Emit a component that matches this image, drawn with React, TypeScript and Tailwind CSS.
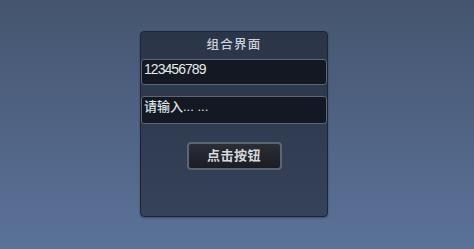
import React from "react";

export default function App() {
  return (
    <div
      className="w-[474px] h-[249px] overflow-hidden pl-[140px] pt-[31px] bg-gradient-to-b from-[#45556f] to-[#5b7299]"
      style={{ fontFamily: '"Liberation Sans", "Noto Sans CJK SC", sans-serif' }}
    >
      <div className="w-[188px] h-[186px] rounded-[4px] border border-[#1c2535] bg-gradient-to-b from-[#2a3548] to-[#354259] flex flex-col shadow-[0_1px_2px_rgba(0,0,0,0.3)]">
        <div className="h-[27px] flex items-center justify-center text-[12.5px] font-medium tracking-[1.2px] text-[#cdd2da]">
          组合界面
        </div>
        <div className="h-[26px] rounded-[3px] border border-[#5d6677] bg-[#131822] pl-[2px] text-[14px] leading-[18px] tracking-[-0.95px] text-[#e6e8ec]">
          123456789
        </div>
        <div className="h-[11px]" />
        <div className="h-[28px] rounded-[3px] border border-[#5d6677] bg-[#131822] pl-[2px] pt-[1px] text-[13px] font-medium leading-[18px] text-[#dde0e5]">
          请输入... ...
        </div>
        <div className="flex justify-center pt-[18px]">
          <button className="w-[95px] h-[28px] rounded-[4px] border-2 border-[#5e6572] bg-gradient-to-b from-[#2a2e35] to-[#1a1d22] text-[13px] font-bold tracking-[0.5px] text-[#d6d8dc] flex items-center justify-center">
            点击按钮
          </button>
        </div>
      </div>
    </div>
  );
}
